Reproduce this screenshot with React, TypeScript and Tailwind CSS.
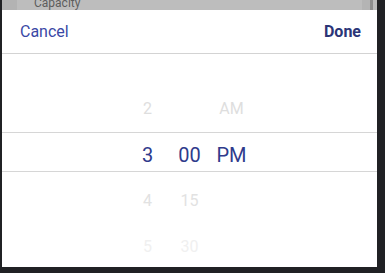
const HOURS = [
  { h: '2', m: '', ap: 'AM', tone: 'text-[#dedede]' },
  { h: '3', m: '00', ap: 'PM', tone: 'selected' },
  { h: '4', m: '15', ap: '', tone: 'text-[#e2e2e2]' },
  { h: '5', m: '30', ap: '', tone: 'text-[#f0f0f0]' },
];

function PickerRow({ h, m, ap, tone }: { h: string; m: string; ap: string; tone: string }) {
  const selected = tone === 'selected';
  const text = selected ? 'text-[20px] text-[#2f3b8c]' : `text-[16px] ${tone}`;
  return (
    <div className={`h-[46px] flex items-center justify-center ${text}`}>
      <div className="w-[42px] text-center">{h}</div>
      <div className="w-[42px] text-center">{m}</div>
      <div className="w-[42px] text-center">{ap}</div>
    </div>
  );
}

export default function App() {
  return (
    <div className="w-[385px] h-[273px] bg-[#202124] flex overflow-hidden font-['Roboto',sans-serif]">
      <div className="w-[2px] shrink-0" />
      <div className="w-[375px] shrink-0 flex flex-col">
        {/* dimmed page behind the sheet */}
        <div className="h-[10px] flex overflow-hidden bg-[#bdbdbd]">
          <div className="w-[15px] bg-[#b3b3b3]" />
          <div className="flex-1 pl-[17px]">
            <div className="text-[12px] leading-[12px] -mt-[3px] text-[#5e5e5e]">Capacity</div>
          </div>
          <div className="w-[8px] bg-[#b4b4b4]" />
          <div className="w-[3px] bg-[#8e8e8e]" />
          <div className="w-[4px] bg-[#bdbdbd]" />
        </div>

        <div className="h-[257px] bg-white flex flex-col">
          <div className="h-[44px] shrink-0 flex items-center justify-between pl-[18px] pr-[16px] border-b border-[#d3d3d3]">
            <button className="text-[16px] text-[#3a48a5]">Cancel</button>
            <button className="text-[16px] font-bold text-[#2b3577]">Done</button>
          </div>

          <div className="relative flex-1 overflow-hidden">
            <div className="pt-[32px]">
              {HOURS.map(r => (
                <PickerRow key={r.h} {...r} />
              ))}
            </div>
            <div className="absolute left-0 right-0 top-[78px] h-[40px] border-y border-[#d6d6d6] pointer-events-none" />
          </div>
        </div>
      </div>
    </div>
  );
}
